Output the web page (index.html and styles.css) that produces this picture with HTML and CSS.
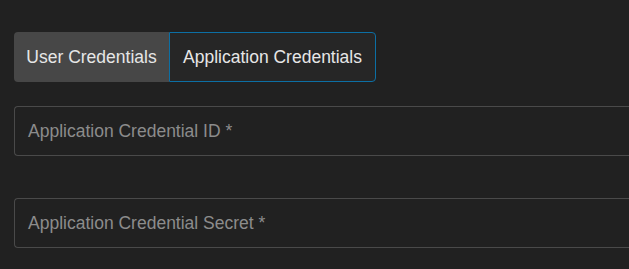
FILE: index.html
```html
<!DOCTYPE html>
<html>
<head>
<meta charset="utf-8">
<link rel="stylesheet" href="styles.css">
</head>
<body>
<div class="page">
  <div class="tabs">
    <div class="tab tab-active">User Credentials</div>
    <div class="tab tab-selected">Application Credentials</div>
  </div>
  <div class="fields">
    <div class="field"><span class="placeholder">Application Credential ID *</span></div>
    <div class="field"><span class="placeholder">Application Credential Secret *</span></div>
  </div>
</div>
</body>
</html>
```
FILE: styles.css
```css
html, body {
  margin: 0;
  padding: 0;
  background: #212121;
  overflow: hidden;
}
body {
  width: 629px;
  height: 269px;
  font-family: "Liberation Sans", Arial, sans-serif;
}
.page {
  padding: 32px 0 0 14px;
}
.tabs {
  display: inline-flex;
  height: 50px;
  border-radius: 4px;
}
.tab {
  display: flex;
  align-items: center;
  box-sizing: border-box;
  height: 50px;
  font-size: 17.5px;
  color: #e6e6e6;
}
.tab-active {
  width: 155px;
  justify-content: center;
  background: #474747;
  border-radius: 4px 0 0 4px;
}
.tab-selected {
  width: 207px;
  justify-content: center;
  background: #262626;
  border: 1px solid #0c6fa4;
  border-radius: 0 4px 4px 0;
}
.fields {
  display: flex;
  flex-direction: column;
  gap: 42px;
  margin-top: 24px;
}
.field {
  box-sizing: border-box;
  width: 615px;
  height: 50px;
  border: 1px solid #4a4a4a;
  border-right: none;
  border-radius: 4px 0 0 4px;
  display: flex;
  align-items: center;
  padding-left: 13px;
}
.placeholder {
  font-size: 17.5px;
  color: #8c8c8c;
}
```
